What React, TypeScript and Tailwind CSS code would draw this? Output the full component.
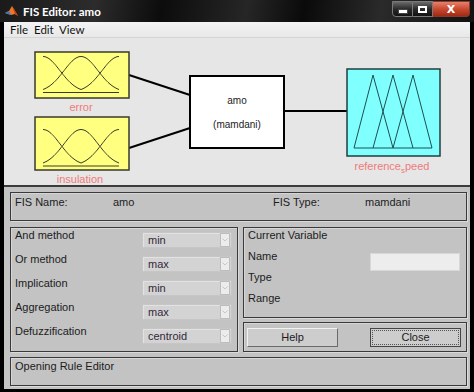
import React from "react";

// Gaussian membership curve as an SVG path
const bell = (peak: number, from: number, to: number, baseY: number, topY: number, sigma = 17) => {
  const pts: string[] = [];
  for (let x = from; x <= to + 0.001; x += 1) {
    const y = baseY - (baseY - topY) * Math.exp(-((x - peak) ** 2) / (2 * sigma * sigma));
    pts.push(`${x.toFixed(1)},${y.toFixed(1)}`);
  }
  return "M" + pts.join(" L");
};

const InputMF = ({ x, y, w, h, baseY, topY }: { x: number; y: number; w: number; h: number; baseY: number; topY: number }) => {
  const p1 = x + 8;
  const p2 = x + 46;
  const p3 = x + 84;
  return (
    <g>
      <rect x={x} y={y} width={w} height={h} fill="#ffff80" stroke="#3a3a2a" strokeWidth={1.5} />
      <path d={bell(p1, p1, p2, baseY, topY)} fill="none" stroke="#3a3a2a" strokeWidth={1} />
      <path d={bell(p2, p1, p3, baseY, topY)} fill="none" stroke="#3a3a2a" strokeWidth={1} />
      <path d={bell(p3, p2, p3, baseY, topY)} fill="none" stroke="#3a3a2a" strokeWidth={1} />
      <line x1={p1} y1={baseY} x2={p3} y2={baseY} stroke="#3a3a2a" strokeWidth={1} />
    </g>
  );
};

const Diagram = () => (
  <svg width={466} height={147} viewBox="4 38 466 147" className="block">
    <rect x={4} y={38} width={466} height={147} fill="#e6e6e6" />
    {/* connectors */}
    <line x1={129} y1={75} x2={190} y2={95} stroke="#000" strokeWidth={2} />
    <line x1={129} y1={148} x2={190} y2={128} stroke="#000" strokeWidth={2} />
    <line x1={284} y1={111} x2={347} y2={111} stroke="#000" strokeWidth={2} />

    <InputMF x={35} y={52} w={94} h={46} baseY={92.5} topY={56.5} />
    <text x={81} y={111} textAnchor="middle" fontSize={11} fill="#f07a7a" fontFamily="Liberation Sans, Arial, sans-serif">error</text>

    <InputMF x={35} y={117} w={94} h={53} baseY={166} topY={129.5} />
    <text x={80} y={183} textAnchor="middle" fontSize={11} fill="#f07a7a" fontFamily="Liberation Sans, Arial, sans-serif">insulation</text>

    {/* system box */}
    <rect x={190} y={76} width={94} height={72} fill="#fff" stroke="#000" strokeWidth={2} />
    <text x={237} y={104} textAnchor="middle" fontSize={10} fill="#222" fontFamily="Liberation Sans, Arial, sans-serif">amo</text>
    <text x={237} y={127.5} textAnchor="middle" fontSize={10} fill="#222" fontFamily="Liberation Sans, Arial, sans-serif">(mamdani)</text>

    {/* output */}
    <rect x={347} y={69} width={93} height={87} fill="#80ffff" stroke="#1f3f3f" strokeWidth={1.5} />
    <g fill="none" stroke="#1f4f4f" strokeWidth={1}>
      <polyline points="354,148 373,75 393,148" />
      <polyline points="373,148 393,75 413,148" />
      <polyline points="393,148 413,75 432,148" />
      <line x1={354} y1={148} x2={432} y2={148} />
    </g>
    <text x={392} y={170} textAnchor="middle" fontSize={11} fill="#f07a7a" fontFamily="Liberation Sans, Arial, sans-serif">
      reference<tspan fontSize={8} dy={3}>s</tspan><tspan dy={-3}>peed</tspan>
    </text>
  </svg>
);

const Dropdown = ({ value }: { value: string }) => (
  <div className="mt-[3px] w-[90px] h-[16px] flex items-center justify-between bg-[#d3d3d3] border border-[#c6c6c6] shadow-[inset_1px_1px_0_#e2e2e2]">
    <span className="pl-[5px] text-[#32283a]">{value}</span>
    <div className="w-[10px] h-[14px] mr-[1px] bg-[#ececec] border border-[#bdbdbd] flex items-center justify-center">
      <svg width="6" height="4" viewBox="0 0 6 4">
        <path d="M0.5 0.5 L3 3 L5.5 0.5" fill="none" stroke="#c8c8c8" strokeWidth="1" />
      </svg>
    </div>
  </div>
);

const panel = "border border-[#3a3a3a] shadow-[inset_1px_1px_0_#d6d6d6,1px_1px_0_#dadada]";

const methods: [string, string][] = [
  ["And method", "min"],
  ["Or method", "max"],
  ["Implication", "min"],
  ["Aggregation", "max"],
  ["Defuzzification", "centroid"],
];

export default function App() {
  return (
    <div className="w-[474px] h-[392px] bg-black flex flex-col overflow-hidden font-['Liberation_Sans',Arial,sans-serif] text-[11px] leading-[13px] text-[#1c1c1c]">
      {/* Title bar */}
      <div className="h-[22px] shrink-0 flex items-start justify-between bg-[linear-gradient(100deg,#1a1a1a_0%,#2c2c2c_20%,#0c0c0c_34%,#262626_52%,#0a0a0a_64%,#2a2a2a_80%,#111_100%)]">
        <div className="flex items-center h-[22px] pl-[5px] gap-[5px]">
          <svg width="13" height="12" viewBox="0 0 13 12">
            <path d="M0 8 L4 6 L7 1 L9 4 L13 11 L10 9 L6 10 Z" fill="#e8782a" />
            <path d="M0 8 L4 6 L6 10 Z" fill="#3a78c8" />
            <path d="M7 1 L9 4 L13 11 L10 9 Z" fill="#c43a1a" />
          </svg>
          <span className="font-['Lato',sans-serif] font-bold text-[11.5px] text-white">FIS Editor: amo</span>
        </div>
        <div className="flex mr-[4px] mt-[1px]">
          <div className="w-[21px] h-[16px] rounded-bl-[4px] border border-[#7a7a7a] bg-[linear-gradient(#6a6a6a,#2a2a2a_50%,#111)] flex items-center justify-center">
            <div className="w-[8px] h-[3px] mt-[4px] bg-white border border-[#444] box-content" />
          </div>
          <div className="w-[20px] h-[16px] border-y border-r border-[#7a7a7a] bg-[linear-gradient(#6a6a6a,#2a2a2a_50%,#111)] flex items-center justify-center">
            <div className="w-[9px] h-[7px] border-2 border-white" />
          </div>
          <div className="w-[37px] h-[16px] rounded-br-[4px] border-y border-r border-[#8a3a2a] bg-[linear-gradient(#e8806a,#c84a30_50%,#a02a14)] flex items-center justify-center">
            <span className="text-white font-bold text-[11px] leading-none font-['DejaVu_Sans',sans-serif]">X</span>
          </div>
        </div>
      </div>

      <div className="flex-1 flex flex-col mx-[4px] mb-[3px]">
        {/* Menu bar */}
        <div className="h-[16px] shrink-0 flex items-center bg-[linear-gradient(#f4f4f4,#e8e8e8)] border-b border-[#d4d4d4] font-['Lato',sans-serif] text-[11.5px] text-[#111]">
          <span className="pl-[6px] w-[30px]">File</span>
          <span className="w-[25px]">Edit</span>
          <span>View</span>
        </div>

        {/* Diagram */}
        <div className="shrink-0 border-b-2 border-[#3c3c3c]">
          <Diagram />
        </div>

        {/* Lower controls */}
        <div className="flex-1 bg-[#c3c3c3] pl-[6px] pr-[3px] pt-[5px] flex flex-col">
          <div className={`${panel} h-[29px] pt-[3px] pl-[4px] flex`}>
            <span className="w-[98px]">FIS Name:</span>
            <span className="w-[160px]">amo</span>
            <span className="w-[92px]">FIS Type:</span>
            <span>mamdani</span>
          </div>

          <div className="mt-[6px] flex gap-[5px]">
            <div className={`${panel} w-[228px] h-[125px] pt-[1px] pl-[4px] flex flex-col`}>
              {methods.map(([label, value]) => (
                <div key={label} className="h-[24px] flex items-start">
                  <span className="w-[127px]">{label}</span>
                  <Dropdown value={value} />
                </div>
              ))}
            </div>

            <div className="flex-1 flex flex-col gap-[4px]">
              <div className={`${panel} h-[91px] pt-[1px] pl-[4px] flex flex-col`}>
                <div className="h-[21px]">Current Variable</div>
                <div className="h-[21px] flex items-start">
                  <span className="w-[122px]">Name</span>
                  <div className="mt-[3px] w-[90px] h-[18px] bg-[#ededed] border border-[#d8d8d8]" />
                </div>
                <div className="h-[21px]">Type</div>
                <div className="h-[21px]">Range</div>
              </div>

              <div className={`${panel} h-[30px] pt-[5px] pl-[3px] pr-[5px] flex justify-between items-start`}>
                <button className="w-[91px] h-[19px] bg-[#cdcdcd] border border-[#f2f2f2] border-r-[#6a6a6a] border-b-[#6a6a6a] text-[11px] text-[#1c1c1c]">
                  Help
                </button>
                <button className="w-[91px] h-[19px] bg-[#cdcdcd] border border-[#444] p-[1px] text-[11px] text-[#1c1c1c]">
                  <div className="w-full h-full border border-dotted border-[#555] flex items-center justify-center">Close</div>
                </button>
              </div>
            </div>
          </div>

          <div className={`${panel} mt-[5px] h-[29px] pt-[2px] pl-[4px]`}>Opening Rule Editor</div>
        </div>
      </div>
    </div>
  );
}
